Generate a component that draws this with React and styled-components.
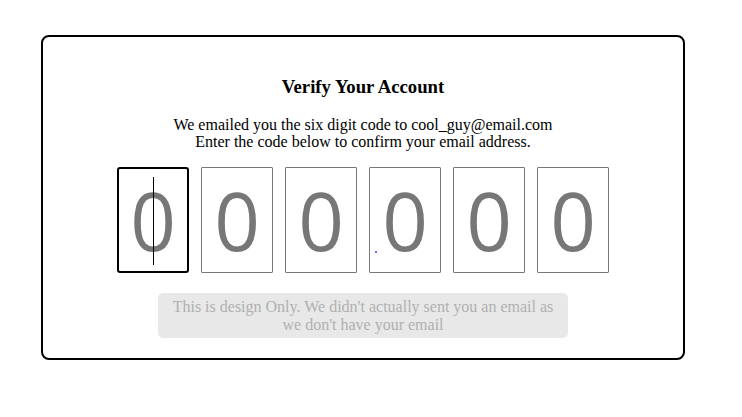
import React from "react";
import styled, { createGlobalStyle } from "styled-components";

const GlobalStyle = createGlobalStyle`
  html, body {
    margin: 0;
    padding: 0;
    background: #ffffff;
    font-family: "Liberation Serif", "Times New Roman", serif;
  }
`;

const Page = styled.main`
  width: 742px;
  height: 417px;
  padding: 35px 0 0 41px;
  box-sizing: border-box;
`;

const Card = styled.section`
  width: 644px;
  height: 325px;
  box-sizing: border-box;
  border: 2px solid #000;
  border-radius: 8px;
  padding-top: 39px;
  display: flex;
  flex-direction: column;
  align-items: center;
`;

const Title = styled.h2`
  margin: 0;
  font-size: 18.72px;
  font-weight: bold;
  line-height: 21px;
  color: #000;
`;

const Message = styled.p`
  margin: 19px 0 0;
  font-size: 16px;
  line-height: 17px;
  text-align: center;
  color: #000;
`;

const CodeRow = styled.div`
  display: flex;
  gap: 12px;
  margin-top: 17px;
`;

const DigitBox = styled.div`
  position: relative;
  width: 72px;
  height: 106px;
  box-sizing: border-box;
  border: ${(p) => (p.$active ? "2px solid #000" : "1px solid #777")};
  border-radius: ${(p) => (p.$active ? "3px" : "1px")};
  display: flex;
  align-items: center;
  justify-content: center;
  font-family: "Open Sans", "DejaVu Sans", sans-serif;
  font-size: 80px;
  color: #777;
  line-height: 1;
`;

const Caret = styled.span`
  position: absolute;
  left: 34px;
  top: 8px;
  width: 1px;
  height: 88px;
  background: #000;
`;

const Dot = styled.span`
  position: absolute;
  left: 5px;
  bottom: 19px;
  width: 2px;
  height: 2px;
  background: #3a3aff;
  border-radius: 50%;
`;

const Note = styled.div`
  margin-top: 20px;
  width: 410px;
  height: 45px;
  box-sizing: border-box;
  padding-top: 5px;
  background: #e8e8e8;
  border-radius: 5px;
  color: #b0b0b0;
  font-size: 16px;
  line-height: 18px;
  text-align: center;
`;

const App = () => {
  const digits = ["0", "0", "0", "0", "0", "0"];

  return (
    <>
      <GlobalStyle />
      <Page>
        <Card>
          <Title>Verify Your Account</Title>
          <Message>
            We emailed you the six digit code to cool_guy@email.com
            <br />
            Enter the code below to confirm your email address.
          </Message>
          <CodeRow>
            {digits.map((d, i) => (
              <DigitBox key={i} $active={i === 0}>
                {d}
                {i === 0 && <Caret />}
                {i === 3 && <Dot />}
              </DigitBox>
            ))}
          </CodeRow>
          <Note>
            This is design Only. We didn't actually sent you an email as
            <br />
            we don't have your email
          </Note>
        </Card>
      </Page>
    </>
  );
};

export default App;
